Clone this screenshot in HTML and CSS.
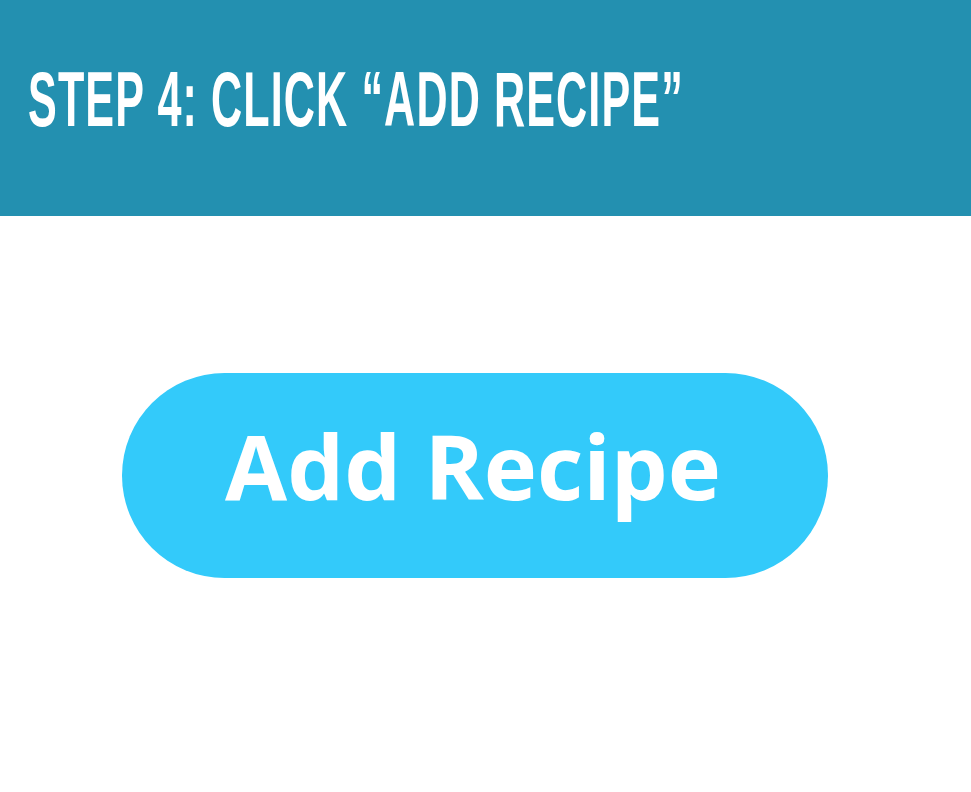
FILE: index.html
```html
<!DOCTYPE html>
<html>
<head>
<meta charset="utf-8">
<link rel="stylesheet" href="styles.css">
</head>
<body>
<header class="banner">
  <h1 class="title">STEP 4: CLICK “ADD RECIPE”</h1>
</header>
<main class="stage">
  <div class="pill">Add Recipe</div>
</main>
</body>
</html>
```
FILE: styles.css
```css
html, body {
  margin: 0;
  padding: 0;
  background: #ffffff;
}
.banner {
  height: 216px;
  background: #2390b0;
  display: flex;
  align-items: flex-start;
  padding-left: 28px;
  box-sizing: border-box;
  overflow: hidden;
}
.title {
  margin: 0;
  padding-top: 60px;
  font-family: "Liberation Sans Narrow", "Liberation Sans", sans-serif;
  font-weight: bold;
  font-size: 78px;
  line-height: 78px;
  color: #ffffff;
  white-space: nowrap;
  letter-spacing: 2px;
  transform: scaleX(0.553);
  transform-origin: left top;
}
.stage {
  padding-top: 157px;
  padding-left: 122px;
}
.pill {
  width: 706px;
  height: 205px;
  border-radius: 103px;
  background: #33cafa;
  color: #ffffff;
  display: flex;
  align-items: center;
  justify-content: center;
  font-family: "Open Sans", Lato, sans-serif;
  font-weight: bold;
  font-size: 90px;
  letter-spacing: 0px;
  padding-bottom: 21px;
  padding-right: 4px;
  box-sizing: border-box;
}
```
